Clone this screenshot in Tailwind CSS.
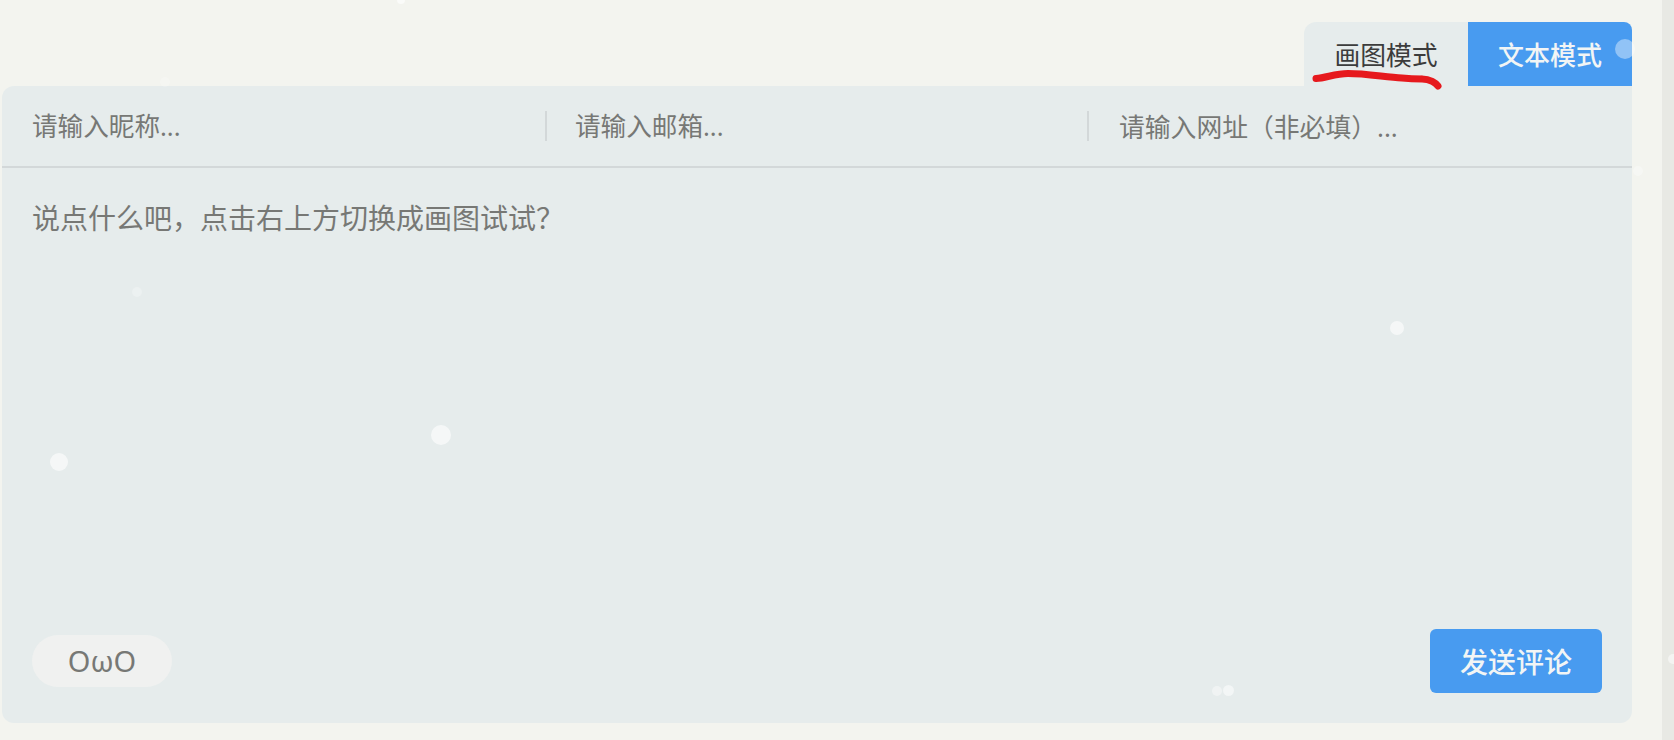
<!DOCTYPE html>
<html lang="zh-CN">

<head>
    <meta charset="UTF-8">
    <title>评论</title>
    <script src="https://cdn.jsdelivr.net/npm/@tailwindcss/browser@4"></script>
</head>

<body class="relative h-[740px] overflow-hidden bg-[#f3f4ef] font-['Noto_Sans','Noto_Sans_CJK_SC',sans-serif]">
    <div class="flex h-full">
        <main class="w-[1662px] pl-[2px] pr-[30px] pt-[22px]">
            <!-- Tabs -->
            <div class="flex justify-end">
                <button class="h-[64px] w-[164px] rounded-tl-xl bg-[#e6ecec] pt-[2px] text-[25.8px] text-[#3c3c3c]">画图模式</button>
                <button class="h-[64px] w-[164px] rounded-tr-lg bg-[#489bf0] pt-[2px] text-[26px] font-medium text-[#f2f5f5]">文本模式</button>
            </div>

            <!-- Comment box -->
            <form class="flex h-[637px] flex-col rounded-b-xl rounded-tl-xl bg-[#e6ecec]">
                <div class="flex h-[82px] shrink-0 items-center border-b-2 border-[#d3d8d9]">
                    <div class="w-[543px] pl-[30px] pt-[2px]">
                        <input type="text" class="w-full bg-transparent text-[25.6px] outline-none placeholder:text-[#777875]" placeholder="请输入昵称...">
                    </div>
                    <span class="h-[30px] w-[2px] bg-[#d3d8d9]"></span>
                    <div class="w-[540px] pl-[28px] pt-[2px]">
                        <input type="text" class="w-full bg-transparent text-[25.6px] outline-none placeholder:text-[#777875]" placeholder="请输入邮箱...">
                    </div>
                    <span class="h-[30px] w-[2px] bg-[#d3d8d9]"></span>
                    <div class="flex-1 pl-[30px] pt-[2px]">
                        <input type="text" class="w-full bg-transparent text-[25.8px] outline-none placeholder:text-[#777875]" placeholder="请输入网址（非必填）...">
                    </div>
                </div>
                <textarea class="flex-1 resize-none bg-transparent px-[30px] pt-[30px] text-[28px] leading-[40px] outline-none placeholder:text-[#777875]" placeholder="说点什么吧，点击右上方切换成画图试试？"></textarea>
                <div class="flex h-[94px] shrink-0 items-start justify-between px-[30px]">
                    <button type="button" class="mt-[6px] h-[52px] w-[140px] rounded-full bg-[#f0f1f0] text-[29px] text-[#777875]">OωO</button>
                    <button type="button" class="h-[64px] w-[172px] rounded-md bg-[#489bf0] pt-[1px] text-[28px] font-medium text-[#f2f5f5]">发送评论</button>
                </div>
            </form>
        </main>
        <!-- Scrollbar strip -->
        <div class="w-[12px] bg-[#e8e9e4]"></div>
    </div>

    <!-- Red pen stroke -->
    <svg class="pointer-events-none absolute left-0 top-0 h-[740px] w-[1674px]" viewBox="0 0 1674 740" fill="none">
        <path d="M1316 78.5C1326 78 1335 73.5 1348 73.5C1366 73.5 1385 77 1402 78C1414 79 1425 79 1422 79C1430 79 1436 83 1438 86" stroke="#e6191d" stroke-width="7" stroke-linecap="round" stroke-linejoin="round"></path>
    </svg>

    <!-- Snow -->
    <span class="absolute left-[160px] top-[77px] size-[10px] rounded-full bg-white/20"></span>
    <span class="absolute left-[397px] top-[-4px] size-[8px] rounded-full bg-white/60"></span>
    <span class="absolute left-[132px] top-[287px] size-[10px] rounded-full bg-white/25"></span>
    <span class="absolute left-[50px] top-[453px] size-[18px] rounded-full bg-white/60"></span>
    <span class="absolute left-[431px] top-[425px] size-[20px] rounded-full bg-white/60"></span>
    <span class="absolute left-[1390px] top-[321px] size-[14px] rounded-full bg-white/60"></span>
    <span class="absolute left-[1212px] top-[686px] size-[10px] rounded-full bg-white/40"></span>
    <span class="absolute left-[1223px] top-[685px] size-[11px] rounded-full bg-white/50"></span>
    <span class="absolute left-[1633px] top-[166px] size-[10px] rounded-full bg-white/30"></span>
    <span class="absolute left-[1615px] top-[39px] size-[20px] rounded-full bg-white/40"></span>
    <span class="absolute left-[1668px] top-[654px] size-[10px] rounded-full bg-white/50"></span>
</body>

</html>
